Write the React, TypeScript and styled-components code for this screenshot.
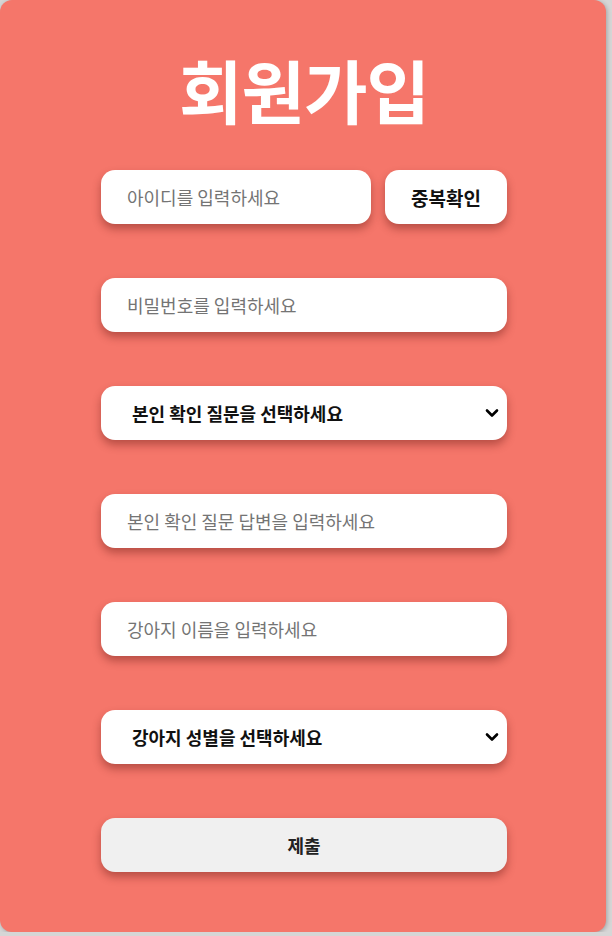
import React from "react";
import styled, { createGlobalStyle } from "styled-components";

const GlobalStyle = createGlobalStyle`
  html, body {
    margin: 0;
    padding: 0;
    background: #d6d6d6;
  }
  body {
    font-family: "Noto Sans CJK KR", "Noto Sans", sans-serif;
  }
  * { box-sizing: border-box; }
`;

const Card = styled.div`
  width: 606px;
  height: 932px;
  background: #f5766a;
  border-radius: 12px;
  box-shadow: 1px 1px 4px rgba(0, 0, 0, 0.25);
  display: flex;
  flex-direction: column;
  align-items: center;
  padding-top: 46px;
`;

const Title = styled.h1`
  margin: 0 0 38px 0;
  font-size: 69px;
  line-height: 86px;
  font-weight: 700;
  color: #ffffff;
  letter-spacing: -1px;
  padding-left: 2px;
`;

const Form = styled.form`
  width: 406px;
  margin-left: 2px;
  display: flex;
  flex-direction: column;
  gap: 54px;
`;

const Row = styled.div`
  display: flex;
  gap: 14px;
  & > input {
    flex: 1;
    min-width: 0;
  }
`;

const fieldBase = `
  height: 54px;
  flex: none;
  border: none;
  outline: none;
  border-radius: 14px;
  background: #ffffff;
  box-shadow: 0 5px 9px rgba(110, 30, 25, 0.45);
  font-family: "Noto Sans CJK KR", "Noto Sans", sans-serif;
`;

const TextInput = styled.input`
  ${fieldBase}
  width: 100%;
  padding: 0 26px;
  font-size: 18px;
  color: #222;
  &::placeholder {
    color: #747474;
  }
`;

const CheckButton = styled.button`
  ${fieldBase}
  width: 122px;
  font-size: 19px;
  font-weight: 600;
  color: #111;
  cursor: pointer;
`;

const SelectWrap = styled.div`
  position: relative;
  display: flex;
`;

const Select = styled.select`
  ${fieldBase}
  appearance: none;
  -webkit-appearance: none;
  width: 100%;
  padding: 0 40px 0 31px;
  font-size: 18px;
  font-weight: 600;
  color: #111;
`;

const Chevron = styled.svg`
  position: absolute;
  right: 8px;
  top: 50%;
  transform: translateY(-50%);
  pointer-events: none;
`;

const SubmitButton = styled.button`
  ${fieldBase}
  width: 100%;
  background: #f0f0f0;
  font-size: 18px;
  font-weight: 600;
  color: #222;
  cursor: pointer;
`;

const ChevronIcon = () => (
  <Chevron width="14" height="10" viewBox="0 0 14 10">
    <path d="M2 2.5 L7 7.5 L12 2.5" fill="none" stroke="#000" strokeWidth="2.6" strokeLinecap="round" strokeLinejoin="round" />
  </Chevron>
);

export default function App() {
  return (
    <>
      <GlobalStyle />
      <Card>
        <Title>회원가입</Title>
        <Form onSubmit={(e) => e.preventDefault()}>
          <Row>
            <TextInput placeholder="아이디를 입력하세요" />
            <CheckButton type="button">중복확인</CheckButton>
          </Row>
          <TextInput type="password" placeholder="비밀번호를 입력하세요" />
          <SelectWrap>
            <Select defaultValue="">
              <option value="">본인 확인 질문을 선택하세요</option>
            </Select>
            <ChevronIcon />
          </SelectWrap>
          <TextInput placeholder="본인 확인 질문 답변을 입력하세요" />
          <TextInput placeholder="강아지 이름을 입력하세요" />
          <SelectWrap>
            <Select defaultValue="">
              <option value="">강아지 성별을 선택하세요</option>
            </Select>
            <ChevronIcon />
          </SelectWrap>
          <SubmitButton type="submit">제출</SubmitButton>
        </Form>
      </Card>
    </>
  );
}
